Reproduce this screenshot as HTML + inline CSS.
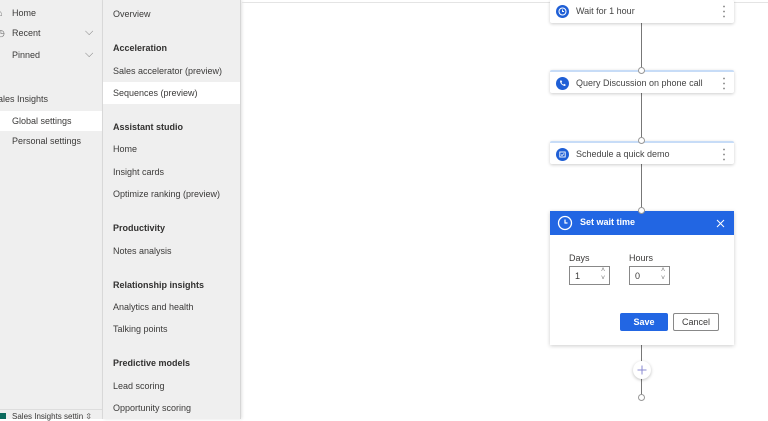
<!DOCTYPE html>
<html><head><style>
*{margin:0;padding:0;box-sizing:border-box}
body{width:768px;height:419px;overflow:hidden;font-family:"Segoe UI","Liberation Sans",sans-serif;font-size:9px;color:#3b3a39;background:#fff;position:relative}
.a{position:absolute;white-space:nowrap}
#nav1{position:absolute;left:0;top:0;width:103px;height:419px;background:#efefef;border-right:1px solid #ddd}
#nav2{position:absolute;left:103px;top:0;width:138px;height:419px;background:#efefef;border-right:1px solid #d6d6d6;box-shadow:1px 0 3px rgba(0,0,0,.12)}
.h{font-weight:bold;color:#323130}
.card{position:absolute;left:550px;width:184px;height:23px;background:#fff;box-shadow:0 1px 3px rgba(0,0,0,.2);border-radius:2px}
.card svg{position:absolute;left:6px;top:5px}
.card .t{position:absolute;left:26px;top:6px;color:#444}
.card .d{position:absolute;right:9px;top:4px;width:2px;height:14px;background:radial-gradient(circle,#999 0.8px,transparent 1px) 0 0/2px 5px}
.line{position:absolute;left:641px;width:1px;background:#777}
.node{position:absolute;width:7px;height:7px;border:1.5px solid #999;border-radius:50%;background:#fff}
.inp{position:absolute;width:41px;height:19px;border:1px solid #888;background:#fff}
</style></head><body>
<div id="nav1">
<div class="a" style="left:-3px;top:8px;color:#666">⌂</div><div class="a" style="left:12px;top:8px">Home</div>
<div class="a" style="left:-3px;top:28px;color:#666">◷</div><div class="a" style="left:12px;top:28px">Recent</div>
<div class="a" style="left:85px;top:26px;color:#777;font-size:11px">⌵</div>
<div class="a" style="left:12px;top:50px">Pinned</div>
<div class="a" style="left:85px;top:48px;color:#777;font-size:11px">⌵</div>
<div class="a" style="left:-2px;top:94px">ales Insights</div>
<div style="position:absolute;left:0;top:111px;width:102px;height:20px;background:#fff"></div>
<div class="a" style="left:12px;top:116px">Global settings</div>
<div class="a" style="left:12px;top:136px">Personal settings</div>
<div style="position:absolute;left:0;top:409px;width:102px;border-top:1px solid #ddd"></div>
<div style="position:absolute;left:0;top:413px;width:6px;height:6px;background:#0b6a5d"></div>
<div class="a" style="left:12px;top:412px;font-size:8px">Sales Insights settin ⇳</div>
</div>
<div id="nav2">
<div class="a" style="left:10px;top:9px">Overview</div>
<div class="a h" style="left:10px;top:43px">Acceleration</div>
<div class="a" style="left:10px;top:66px">Sales accelerator (preview)</div>
<div style="position:absolute;left:0;top:82px;width:137px;height:22px;background:#fff"></div>
<div class="a" style="left:10px;top:88px">Sequences (preview)</div>
<div class="a h" style="left:10px;top:122px">Assistant studio</div>
<div class="a" style="left:10px;top:144px">Home</div>
<div class="a" style="left:10px;top:167px">Insight cards</div>
<div class="a" style="left:10px;top:189px">Optimize ranking (preview)</div>
<div class="a h" style="left:10px;top:223px">Productivity</div>
<div class="a" style="left:10px;top:246px">Notes analysis</div>
<div class="a h" style="left:10px;top:280px">Relationship insights</div>
<div class="a" style="left:10px;top:302px">Analytics and health</div>
<div class="a" style="left:10px;top:324px">Talking points</div>
<div class="a h" style="left:10px;top:358px">Predictive models</div>
<div class="a" style="left:10px;top:381px">Lead scoring</div>
<div class="a" style="left:10px;top:403px">Opportunity scoring</div>
</div>
<div style="position:absolute;left:242px;top:2px;width:526px;border-top:1px solid #e4e4e4"></div>

<div class="line" style="top:23px;height:48px"></div>
<div class="line" style="top:93px;height:48px"></div>
<div class="line" style="top:164px;height:48px"></div>
<div class="line" style="top:345px;height:52px"></div>

<div class="card" style="top:0"><svg width="13" height="13" viewBox="0 0 13 13"><circle cx="6.5" cy="6.5" r="6.5" fill="#1f5fd6"/><circle cx="6.5" cy="6.5" r="3.5" fill="none" stroke="#fff" stroke-width="1"/><path d="M6.5 4.5v2h1.5" stroke="#fff" fill="none" stroke-width="0.9"/></svg><div class="t">Wait for 1 hour</div><div class="d"></div></div>
<div class="card" style="top:70px;border-top:2px solid #c7dcf7"><svg width="13" height="13" viewBox="0 0 13 13"><circle cx="6.5" cy="6.5" r="6.5" fill="#1f5fd6"/><path d="M4 3.8l1.2-.5 1 1.6-.8.7c.4 1 1 1.6 2 2l.7-.8 1.6 1-.5 1.2C6.5 9 4 6.5 4 3.8z" fill="#fff"/></svg><div class="t">Query Discussion on phone call</div><div class="d"></div></div>
<div class="card" style="top:141px;border-top:2px solid #c7dcf7"><svg width="13" height="13" viewBox="0 0 13 13"><circle cx="6.5" cy="6.5" r="6.5" fill="#1f5fd6"/><rect x="3.8" y="4" width="5.4" height="5" fill="none" stroke="#fff" stroke-width="0.9"/><path d="M5 6.5l1 1 2-2" stroke="#fff" fill="none" stroke-width="0.8"/></svg><div class="t">Schedule a quick demo</div><div class="d"></div></div>
<div class="node" style="left:638px;top:67px"></div>
<div class="node" style="left:638px;top:137px"></div>

<div style="position:absolute;left:550px;top:211px;width:184px;height:134px;background:#fff;box-shadow:0 1px 4px rgba(0,0,0,.2)">
<div style="height:24px;background:#2266e3;color:#fff;position:relative">
<svg style="position:absolute;left:7px;top:4px" width="16" height="16" viewBox="0 0 16 16"><circle cx="8" cy="8" r="6.5" fill="none" stroke="#fff" stroke-width="1.3"/><path d="M8 4.5v3.5h2.5" stroke="#fff" fill="none" stroke-width="1.2"/></svg>
<div class="a h" style="left:30px;top:6px;color:#fff">Set wait time</div>
<svg style="position:absolute;left:166px;top:8px" width="9" height="9" viewBox="0 0 9 9"><path d="M1 1l7 7M8 1L1 8" stroke="#fff" stroke-width="1"/></svg>
</div>
<div class="a" style="left:19px;top:42px">Days</div>
<div class="a" style="left:79px;top:42px">Hours</div>
<div class="inp" style="left:19px;top:55px"><span class="a" style="left:5px;top:4px">1</span><span class="a" style="left:31px;top:0;font-size:7px;color:#777;line-height:8px">˄<br>˅</span></div>
<div class="inp" style="left:79px;top:55px"><span class="a" style="left:5px;top:4px">0</span><span class="a" style="left:31px;top:0;font-size:7px;color:#777;line-height:8px">˄<br>˅</span></div>
<div style="position:absolute;left:70px;top:102px;width:48px;height:18px;background:#2266e3;color:#fff;font-weight:bold;text-align:center;line-height:18px;border-radius:2px">Save</div>
<div style="position:absolute;left:123px;top:102px;width:46px;height:18px;border:1px solid #888;text-align:center;line-height:16px;border-radius:2px">Cancel</div>
</div>
<div class="node" style="left:638px;top:207px"></div>
<div style="position:absolute;left:633px;top:361px;width:18px;height:18px;border-radius:50%;background:#fff;box-shadow:0 1px 3px rgba(0,0,0,.25)"><svg style="position:absolute;left:4px;top:4px" width="10" height="10" viewBox="0 0 10 10"><path d="M5 0.5v9M0.5 5h9" stroke="#8a8ad0" stroke-width="1"/></svg></div>
<div class="node" style="left:638px;top:394px"></div>
</body></html>
